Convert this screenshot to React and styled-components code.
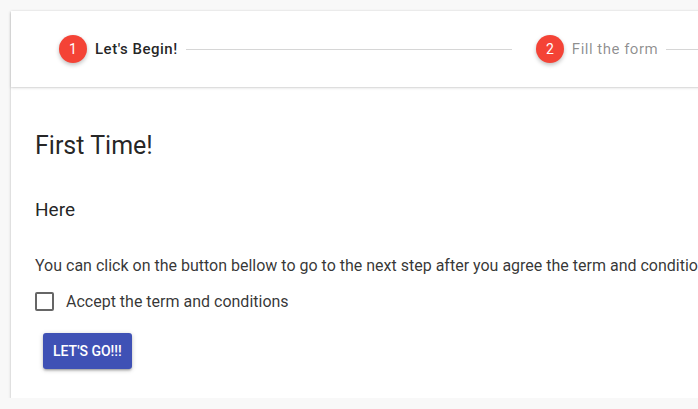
import React, { useState } from 'react';
import styled, { createGlobalStyle } from 'styled-components';

const GlobalStyle = createGlobalStyle`
  html, body {
    margin: 0;
    padding: 0;
    background: #f8f8f8;
    overflow: hidden;
  }
  body {
    font-family: Roboto, "Liberation Sans", Arial, sans-serif;
    color: rgba(0, 0, 0, 0.87);
  }
`;

const Page = styled.div`
  padding: 11px 0 0 11px;
  width: 1110px;
`;

const Card = styled.div`
  display: flex;
  flex-direction: column;
  background: #fff;
  box-shadow: 0 1px 3px rgba(0, 0, 0, 0.2), 0 1px 1px rgba(0, 0, 0, 0.14), 0 2px 1px -1px rgba(0, 0, 0, 0.12);
`;

const Stepper = styled.div`
  display: flex;
  align-items: center;
  padding: 24px;
  position: relative;
  z-index: 1;
  box-shadow: 0 1px 3px rgba(0, 0, 0, 0.12), 0 1px 1px rgba(0, 0, 0, 0.06);
`;

const Step = styled.div`
  display: flex;
  align-items: center;
  padding: 0 8px 0 24px;
`;

const StepIcon = styled.div`
  width: 28px;
  height: 28px;
  border-radius: 50%;
  background: #f44336;
  color: #fff;
  font-size: 14px;
  display: flex;
  align-items: center;
  justify-content: center;
  box-shadow: 0 2px 4px rgba(0, 0, 0, 0.25);
`;

const StepLabel = styled.span`
  margin-left: 8px;
  font-size: 15px;
  letter-spacing: 0.5px;
  font-weight: ${p => (p.active ? 500 : 400)};
  color: ${p => (p.active ? 'rgba(0,0,0,0.87)' : 'rgba(0,0,0,0.45)')};
`;

const Connector = styled.div`
  flex: 1;
  height: 1px;
  background: #d6d6d6;
`;

const Content = styled.div`
  padding: 43px 24px 29px;
`;

const Title = styled.h2`
  margin: 0;
  font-size: 25px;
  font-weight: 400;
  line-height: 32px;
`;

const Subtitle = styled.h3`
  margin: 34px 0 0;
  font-size: 19px;
  font-weight: 400;
  line-height: 27px;
`;

const Text = styled.p`
  margin: 32px 0 0;
  font-size: 16px;
  line-height: 21px;
  color: rgba(0, 0, 0, 0.8);
  white-space: nowrap;
`;

const CheckRow = styled.label`
  display: flex;
  align-items: center;
  margin-top: 16px;
  font-size: 16px;
  color: rgba(0, 0, 0, 0.8);
  cursor: pointer;
`;

const Box = styled.span`
  width: 15px;
  height: 15px;
  border: 2px solid ${p => (p.checked ? '#3f51b5' : '#666')};
  background: ${p => (p.checked ? '#3f51b5' : 'transparent')};
  border-radius: 2px;
  margin-right: 12px;
  display: flex;
  align-items: center;
  justify-content: center;
`;

const Button = styled.button`
  margin: 22px 0 0 8px;
  height: 36px;
  padding: 0 10px;
  border: none;
  border-radius: 3px;
  background: #3f51b5;
  color: #fff;
  font-family: Roboto, "Liberation Sans", Arial, sans-serif;
  font-size: 14px;
  font-weight: 500;
  text-transform: uppercase;
  box-shadow: 0 1px 5px rgba(0, 0, 0, 0.2), 0 2px 2px rgba(0, 0, 0, 0.14), 0 3px 1px -2px rgba(0, 0, 0, 0.12);
  cursor: pointer;
`;

const steps = ["Let's Begin!", 'Fill the form', 'Done'];

export default function App() {
  const [checked, setChecked] = useState(false);
  return (
    <>
      <GlobalStyle />
      <Page>
        <Card>
          <Stepper>
            {steps.map((label, i) => (
              <React.Fragment key={label}>
                {i > 0 && <Connector />}
                <Step>
                  <StepIcon>{i + 1}</StepIcon>
                  <StepLabel active={i === 0}>{label}</StepLabel>
                </Step>
              </React.Fragment>
            ))}
          </Stepper>
          <Content>
            <Title>First Time!</Title>
            <Subtitle>Here</Subtitle>
            <Text>
              You can click on the button bellow to go to the next step after you agree the term and conditions.
            </Text>
            <CheckRow onClick={() => setChecked(!checked)}>
              <Box checked={checked}>
                {checked && (
                  <svg width="12" height="12" viewBox="0 0 24 24">
                    <path d="M9 16.2 4.8 12l-1.4 1.4L9 19 21 7l-1.4-1.4z" fill="#fff" />
                  </svg>
                )}
              </Box>
              Accept the term and conditions
            </CheckRow>
            <div>
              <Button>Let's go!!!</Button>
            </div>
          </Content>
        </Card>
      </Page>
    </>
  );
}
